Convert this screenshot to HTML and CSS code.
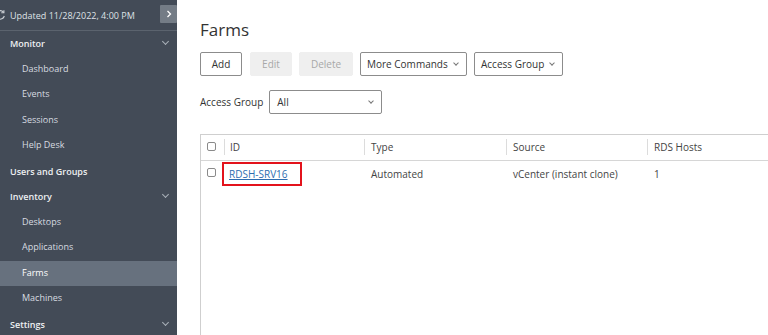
FILE: index.html
```html
<!DOCTYPE html>
<html lang="en">
<head>
<meta charset="utf-8">
<title>Farms</title>
<link rel="stylesheet" href="styles.css">
</head>
<body>
<div class="app">
  <aside class="sidebar">
    <div class="status">
      <svg class="refresh" width="12" height="12" viewBox="0 0 12 12"><path d="M9.5 3.2A4.3 4.3 0 1 0 10.3 7" fill="none" stroke="#cfd3d8" stroke-width="1.1"/><path d="M9.9 1.2v2.6H7.3" fill="none" stroke="#cfd3d8" stroke-width="1.1"/></svg>
      <span class="status-text">Updated 11/28/2022, 4:00 PM</span>
      <button class="expand"><svg width="6" height="8" viewBox="0 0 6 8"><path d="M1.5 1l3 3-3 3" fill="none" stroke="#fff" stroke-width="1.3"/></svg></button>
    </div>
    <nav class="nav">
      <div class="nav-item head">Monitor<span class="chev"></span></div>
      <div class="nav-item sub">Dashboard</div>
      <div class="nav-item sub">Events</div>
      <div class="nav-item sub">Sessions</div>
      <div class="nav-item sub">Help Desk</div>
      <div class="nav-item head">Users and Groups</div>
      <div class="nav-item head">Inventory<span class="chev"></span></div>
      <div class="nav-item sub">Desktops</div>
      <div class="nav-item sub">Applications</div>
      <div class="nav-item sub active">Farms</div>
      <div class="nav-item sub">Machines</div>
      <div class="nav-item head">Settings<span class="chev"></span></div>
    </nav>
  </aside>
  <main class="main">
    <h1 class="title">Farms</h1>
    <div class="toolbar">
      <button class="btn btn-add">Add</button>
      <button class="btn btn-disabled btn-edit">Edit</button>
      <button class="btn btn-disabled btn-delete">Delete</button>
      <div class="select sel-more">More Commands<span class="sel-chev"></span></div>
      <div class="select sel-access">Access Group<span class="sel-chev"></span></div>
    </div>
    <div class="filter">
      <span class="filter-label">Access Group</span>
      <div class="select sel-all">All<span class="sel-chev"></span></div>
    </div>
    <div class="table">
      <div class="tr thead">
        <div class="td cb-cell"><span class="cb"></span></div>
        <div class="td"><span class="th-label">ID</span></div>
        <div class="td"><span class="th-label">Type</span></div>
        <div class="td"><span class="th-label">Source</span></div>
        <div class="td"><span class="th-label">RDS Hosts</span></div>
      </div>
      <div class="tr trow">
        <div class="td cb-cell"><span class="cb"></span></div>
        <div class="td"><span class="highlight"><a href="#" class="link">RDSH-SRV16</a></span></div>
        <div class="td"><span class="cell-text">Automated</span></div>
        <div class="td"><span class="cell-text">vCenter (instant clone)</span></div>
        <div class="td"><span class="cell-text">1</span></div>
      </div>
    </div>
  </main>
</div>
</body>
</html>
```
FILE: styles.css
```css
* { box-sizing: border-box; }
html, body { margin: 0; padding: 0; }
body {
  width: 768px;
  height: 335px;
  overflow: hidden;
  font-family: "Open Sans", "Liberation Sans", sans-serif;
  background: #fff;
  color: #333;
}
.app {
  display: flex;
  height: 335px;
}
.sidebar {
  width: 177px;
  flex: none;
  background: #434b57;
  overflow: hidden;
  color: #dde0e4;
}
.status {
  height: 31px;
  border-bottom: 1px solid #5b636e;
  display: flex;
  align-items: center;
}
.refresh {
  margin-left: -6px;
  margin-right: 4px;
  flex: none;
}
.status-text {
  font-size: 9px;
  color: #dfe2e6;
  flex: 1;
  white-space: nowrap;
}
.expand {
  width: 17px;
  height: 18px;
  margin-top: -2px;
  border: none;
  background: #747c86;
  padding: 0;
  display: flex;
  align-items: center;
  justify-content: center;
  border-radius: 1px;
}
.nav { display: flex; flex-direction: column; }
.nav-item {
  height: 25.5px;
  display: flex;
  align-items: center;
  font-size: 9px;
  white-space: nowrap;
}
.nav-item.head {
  padding-left: 10px;
  font-weight: 600;
  color: #eef0f2;
}
.nav-item.sub {
  padding-left: 22px;
  color: #d7dbe0;
  padding-bottom: 2px;
}
.nav-item.active {
  background: #67717e;
  color: #fff;
}
.chev {
  margin-left: auto;
  margin-right: 9px;
  width: 5px;
  height: 5px;
  border-right: 1px solid #a9b0b8;
  border-bottom: 1px solid #a9b0b8;
  transform: translateY(-2px) rotate(45deg);
}
.main {
  flex: 1;
  padding-left: 23px;
  min-width: 0;
  overflow: hidden;
}
.title {
  margin: 19px 0 0 0;
  font-size: 17px;
  line-height: 22px;
  font-weight: 400;
  color: #333;
  height: 22px;
}
.toolbar {
  display: flex;
  margin-top: 11px;
}
.btn, .select {
  height: 24px;
  font-family: inherit;
  font-size: 10px;
  border-radius: 2px;
  display: flex;
  align-items: center;
  padding: 0;
}
.btn {
  justify-content: center;
  border: 1px solid #8c8c8c;
  background: #fff;
  color: #333;
}
.btn-add { width: 42px; margin-right: 8px; }
.btn-disabled {
  background: #efefef;
  border-color: #efefef;
  color: #a8a8a8;
}
.btn-edit { width: 42px; margin-right: 7px; }
.btn-delete { width: 54px; margin-right: 7px; }
.select {
  border: 1px solid #8c8c8c;
  background: #fff;
  color: #333;
  padding-left: 6px;
}
.sel-more { width: 107px; margin-right: 7px; }
.sel-access { width: 89px; }
.sel-chev {
  margin-left: auto;
  margin-right: 8px;
  width: 4px;
  height: 4px;
  border-right: 1px solid #777;
  border-bottom: 1px solid #777;
  transform: translateY(-1px) rotate(45deg);
}
.filter {
  display: flex;
  align-items: center;
  margin-top: 14px;
}
.filter-label {
  font-size: 10px;
  color: #333;
  margin-right: 6px;
}
.sel-all { width: 113px; padding-left: 7px; }
.table {
  margin-top: 20px;
  border-top: 1px solid #cfcfcf;
  border-left: 1px solid #cfcfcf;
  height: 201px;
  width: 568px;
}
.tr {
  display: grid;
  grid-template-columns: 23px 140px 142px 141px 1fr;
}
.thead {
  height: 26px;
  border-bottom: 1px solid #d6d6d6;
}
.trow { height: 26px; }
.td {
  display: flex;
  align-items: center;
  font-size: 10px;
  color: #444;
  white-space: nowrap;
}
.thead .td { padding-bottom: 2px; }
.cb-cell { padding-left: 6px; }
.trow .cb-cell { align-items: flex-start; padding-top: 7px; }
.cb {
  width: 9px;
  height: 9px;
  border: 1px solid #8a8a8a;
  border-radius: 2px;
  background: #fff;
}
.th-label {
  border-left: 1px solid #dcdcdc;
  height: 16px;
  line-height: 16px;
  padding-left: 6px;
  color: #444;
}
.thead .td:nth-child(2) .th-label { padding-left: 5px; }
.cell-text { padding-left: 7px; padding-bottom: 1px; }
.highlight {
  display: inline-flex;
  align-items: center;
  margin-left: -2px;
  height: 24px;
  border: 2px solid #e3131c;
  padding: 0 12px 1px 5px;
}
.link {
  color: #2e6db0;
  text-decoration: underline;
  font-size: 10px;
}
```
